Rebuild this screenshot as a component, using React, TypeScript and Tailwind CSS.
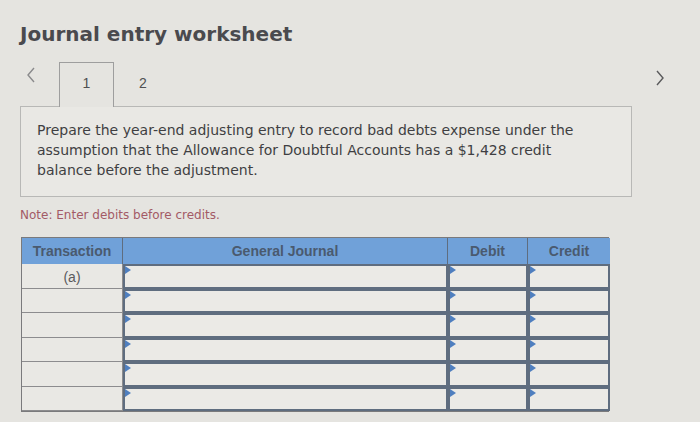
import React from "react";

const rows = ["(a)", "", "", "", "", ""];

function Flag() {
  return (
    <span className="absolute left-0 top-0 h-0 w-0 border-y-[4px] border-l-[6px] border-y-transparent border-l-[#4f7fbf]" />
  );
}

function InputCell() {
  return (
    <div className="relative border-2 border-[#5f6d7f] bg-[#ebeae6]">
      <Flag />
    </div>
  );
}

function Chevron({ dir }: { dir: "left" | "right" }) {
  return (
    <svg width="10" height="16" viewBox="0 0 10 16" fill="none" stroke="currentColor" strokeWidth="1.4">
      {dir === "left" ? <path d="M8 1 L2 8 L8 15" /> : <path d="M2 1 L8 8 L2 15" />}
    </svg>
  );
}

export default function App() {
  return (
    <div
      className="h-[422px] w-[700px] overflow-hidden bg-[#e5e4e0] text-[#3f3f42]"
      style={{ fontFamily: '"DejaVu Sans", Verdana, sans-serif' }}
    >
      <h1 className="px-[20px] pt-[22px] text-[20px] font-bold leading-[24px] text-[#4a4a4e]">
        Journal entry worksheet
      </h1>

      <div
        className="relative mt-[16px] flex h-[44px] items-start"
        style={{ fontFamily: '"Liberation Sans", Arial, sans-serif' }}
      >
        <span className="ml-[26px] mt-[5px] text-[#8a8a8c]">
          <Chevron dir="left" />
        </span>
        <div className="z-10 ml-[23px] flex h-[45px] w-[55px] justify-center border border-b-0 border-[#9e9e9e] bg-[#e5e4e0] pt-[10px] text-[14px] text-[#505052]">
          1
        </div>
        <span className="ml-[25px] pt-[11px] text-[14px] text-[#505052]">2</span>
        <span className="ml-auto mr-[35px] mt-[8px] text-[#5a5a5c]">
          <Chevron dir="right" />
        </span>
      </div>

      <div className="mx-[20px] mr-[68px] border border-[#b8b8b6] bg-[#e9e8e4] px-[16px] pb-[16px] pt-[13px] text-[14px] leading-[20px]">
        <p className="w-[552px]">
          Prepare the year-end adjusting entry to record bad debts expense under the assumption that the
          Allowance for Doubtful Accounts has a $1,428 credit balance before the adjustment.
        </p>
      </div>

      <p className="px-[20px] pt-[10px] text-[12px] leading-[16px] text-[#a35a66]">
        Note: Enter debits before credits.
      </p>

      <div
        className="ml-[21px] mt-[14px] grid w-[588px] grid-cols-[101px_325px_80px_82px] grid-rows-[26px_repeat(6,24.5px)] border border-[#7a7a7c]"
        style={{ fontFamily: '"Liberation Sans", Arial, sans-serif' }}
      >
        <div className="flex items-center justify-center border-r border-[#5f6d7f] bg-[#70a1d9] text-[14px] font-bold text-[#4a5a6f]">
          Transaction
        </div>
        <div className="flex items-center justify-center border-r border-[#5f6d7f] bg-[#70a1d9] text-[14px] font-bold text-[#4a5a6f]">
          General Journal
        </div>
        <div className="flex items-center justify-center border-r border-[#5f6d7f] bg-[#70a1d9] text-[14px] font-bold text-[#4a5a6f]">
          Debit
        </div>
        <div className="flex items-center justify-center bg-[#70a1d9] text-[14px] font-bold text-[#4a5a6f]">
          Credit
        </div>
        {rows.map((r, i) => (
          <React.Fragment key={i}>
            <div className="flex items-start justify-center border-b border-r border-[#8c8c8e] bg-[#e9e8e4] pt-[3px] text-[14px] text-[#5a5a5c]">
              {r}
            </div>
            <InputCell />
            <InputCell />
            <InputCell />
          </React.Fragment>
        ))}
      </div>
    </div>
  );
}
